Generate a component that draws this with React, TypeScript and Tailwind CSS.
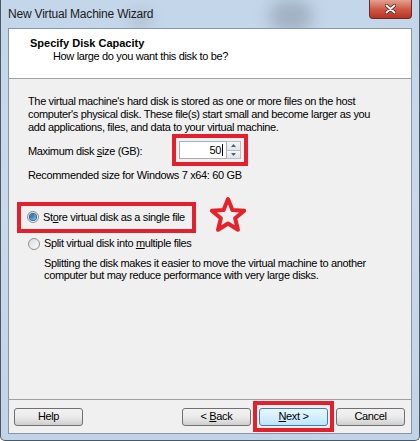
import React from "react";

const red = "border-[#e3202c]";

function Radio({ checked }: { checked?: boolean }) {
  return (
    <span className="relative flex h-[12px] w-[12px] shrink-0 items-center justify-center rounded-full border border-[#8e8f8f] bg-gradient-to-br from-[#dcdcdc] to-[#fbfbfb]">
      {checked && (
        <span className="h-[6px] w-[6px] rounded-full bg-gradient-to-br from-[#1c5a95] to-[#7fbdf0] shadow-[0_0_0_1px_#31619a]" />
      )}
    </span>
  );
}

function WinButton({ children, primary }: { children: React.ReactNode; primary?: boolean }) {
  return (
    <button
      className={
        "flex h-[18px] w-[69px] items-center justify-center whitespace-pre rounded-[3px] border text-[11px] tracking-[-0.35px] text-black " +
        (primary
          ? "border-[#3c7fb1] bg-gradient-to-b from-[#eaf6fd] to-[#bee6fd]"
          : "border-[#707070] bg-gradient-to-b from-[#f2f2f2] via-[#ebebeb] to-[#cfcfcf]")
      }
    >
      {children}
    </button>
  );
}

export default function App() {
  return (
    <div className="relative flex h-[441px] w-[420px] flex-col overflow-hidden rounded-b-[5px] border-x border-b border-[#4d5864] bg-gradient-to-b from-[#c3d6ea] via-[#c9d9ea] to-[#c1d3e6] font-['Liberation_Sans',Arial,sans-serif]">
      {/* blurred desktop behind the glass */}
      <div className="pointer-events-none absolute left-[268px] top-[0px] h-[32px] w-[44px] rounded-full bg-[#6f7a87] opacity-40 blur-[8px]" />
      <div className="pointer-events-none absolute left-[128px] top-[10px] h-[18px] w-[24px] rounded-full bg-[#8a939e] opacity-30 blur-[7px]" />

      {/* title bar */}
      <div className="relative flex h-[28px] shrink-0 items-start justify-between pl-[7px] pr-[7px]">
        <span className="mt-[7px] text-[12px] leading-[14px] tracking-[-0.2px] text-[#1b1b1b]">New Virtual Machine Wizard</span>
        <button className="flex h-[19px] w-[43px] items-center justify-center rounded-b-[4px] border border-t-0 border-[#6b2a22] bg-gradient-to-b from-[#e3a092] via-[#cf5a48] to-[#b8321f]">
          <svg width="11" height="10" viewBox="0 0 11 10">
            <path d="M1.5 1.5 L9.5 8.5 M9.5 1.5 L1.5 8.5" stroke="#5a1a12" strokeWidth="3.6" strokeLinecap="round" />
            <path d="M1.5 1.5 L9.5 8.5 M9.5 1.5 L1.5 8.5" stroke="#ffffff" strokeWidth="2" strokeLinecap="round" />
          </svg>
        </button>
      </div>

      {/* client area */}
      <div className="relative mx-[7px] mb-[6px] flex flex-1 flex-col border border-[#8496aa] bg-[#f0f0f0] text-[11px] tracking-[-0.35px] text-black">
        <div className="h-[50px] shrink-0 border-b border-[#a0a0a0] bg-white pl-[21px] pt-[8px] leading-[13px]">
          <div className="font-bold tracking-normal">Specify Disk Capacity</div>
          <div className="pl-[23px]">How large do you want this disk to be?</div>
        </div>

        <div className="flex flex-1 flex-col pl-[19px] pt-[16px] leading-[13px]">
          <p className="whitespace-nowrap">
            The virtual machine's hard disk is stored as one or more files on the host
            <br />
            computer's physical disk. These file(s) start small and become larger as you
            <br />
            add applications, files, and data to your virtual machine.
          </p>

          <div className="flex h-[32px] items-center">
            <span className="w-[144px] pt-[3px]">
              Maximum disk <u>s</u>ize (GB):
            </span>
            <div className={"flex h-[32px] w-[76px] items-center border-4 px-[3px] " + red}>
              <div className="flex h-[18px] flex-1">
                <div className="flex flex-1 items-center justify-end border border-[#abadb3] border-t-[#9cb2c9] bg-white pr-[3px]">
                  <span>50</span>
                  <span className="ml-[1px] h-[12px] w-px bg-black" />
                </div>
                <div className="flex w-[14px] flex-col">
                  <div className="flex flex-1 items-center justify-center border border-l-0 border-[#b8bdc4] bg-gradient-to-b from-[#f6f6f6] to-[#e2e4e8]">
                    <svg width="5" height="3" viewBox="0 0 5 3"><path d="M0 3 L2.5 0 L5 3 Z" fill="#4b5f7a" /></svg>
                  </div>
                  <div className="flex flex-1 items-center justify-center border border-l-0 border-t-0 border-[#b8bdc4] bg-gradient-to-b from-[#f6f6f6] to-[#e2e4e8]">
                    <svg width="5" height="3" viewBox="0 0 5 3"><path d="M0 0 L2.5 3 L5 0 Z" fill="#4b5f7a" /></svg>
                  </div>
                </div>
              </div>
            </div>
          </div>

          <p className="mt-[3px]">Recommended size for Windows 7 x64: 60 GB</p>

          <div className="ml-[-11px] mt-[18px] flex items-center gap-[10px]">
            <div className={"flex h-[31px] w-[179px] items-center gap-[4px] border-4 pl-[6px] " + red}>
              <Radio checked />
              <span>
                St<u>o</u>re virtual disk as a single file
              </span>
            </div>
            <svg width="44" height="38" viewBox="0 0 44 38" className="-mt-[4px]">
              <polygon
                points="22,3 26.4,13.9 38.2,14.8 29.1,22.3 32,33.8 22,27.5 12,33.8 14.9,22.3 5.8,14.8 17.6,13.9"
                fill="none"
                stroke="#e8202a"
                strokeWidth="4"
                strokeLinejoin="round"
              />
            </svg>
          </div>

          <div className="mt-[3px] flex h-[13px] items-center gap-[4px]">
            <Radio />
            <span>
              Split virtual disk into <u>m</u>ultiple files
            </span>
          </div>

          <p className="mt-[7px] whitespace-nowrap pl-[16px] leading-[12px]">
            Splitting the disk makes it easier to move the virtual machine to another
            <br />
            computer but may reduce performance with very large disks.
          </p>
        </div>

        <div className="flex h-[34px] shrink-0 items-center border-t border-[#a0a0a0] pl-[5px] pr-[6px]">
          <WinButton>Help</WinButton>
          <div className="flex-1" />
          <WinButton>
            {"< "}
            <u>B</u>ack
          </WinButton>
          <div className={"ml-[2px] flex h-[31px] w-[81px] items-center justify-center border-4 " + red}>
            <WinButton primary>
              <u>N</u>
              {"ext >"}
            </WinButton>
          </div>
          <div className="ml-[2px]">
            <WinButton>Cancel</WinButton>
          </div>
        </div>
      </div>
    </div>
  );
}
